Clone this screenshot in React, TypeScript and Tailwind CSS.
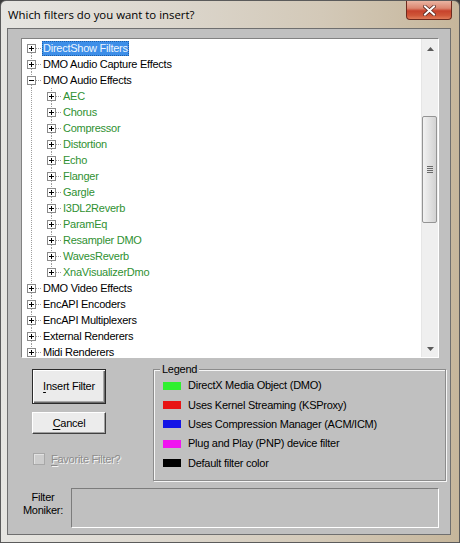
import React from 'react';

type Row = { label: string; level: 0 | 1; sel?: boolean; expanded?: boolean; first?: boolean; last?: boolean };

const children = ['AEC', 'Chorus', 'Compressor', 'Distortion', 'Echo', 'Flanger', 'Gargle', 'I3DL2Reverb', 'ParamEq', 'Resampler DMO', 'WavesReverb', 'XnaVisualizerDmo'];

const rows: Row[] = [
  { label: 'DirectShow Filters', level: 0, sel: true, first: true },
  { label: 'DMO Audio Capture Effects', level: 0 },
  { label: 'DMO Audio Effects', level: 0, expanded: true },
  ...children.map((c, i) => ({ label: c, level: 1 as const, last: i === children.length - 1 })),
  { label: 'DMO Video Effects', level: 0 },
  { label: 'EncAPI Encoders', level: 0 },
  { label: 'EncAPI Multiplexers', level: 0 },
  { label: 'External Renderers', level: 0 },
  { label: 'Midi Renderers', level: 0 },
];

function Expander({ minus, top, bottom }: { minus?: boolean; top: boolean; bottom: boolean }) {
  return (
    <svg width="20" height="16" shapeRendering="crispEdges" className="shrink-0">
      {top && <path d="M9.5 0V4" stroke="#a0a0a0" strokeDasharray="1 1" />}
      {bottom && <path d="M9.5 13V16" stroke="#a0a0a0" strokeDasharray="1 1" />}
      <path d="M14 8.5H20" stroke="#a0a0a0" strokeDasharray="1 1" />
      <rect x="5.5" y="4.5" width="8" height="8" fill="#fff" stroke="#8a8a8a" />
      <path d="M7 8.5H12" stroke="#000" />
      {!minus && <path d="M9.5 6V11" stroke="#000" />}
    </svg>
  );
}

function LineCell() {
  return (
    <svg width="20" height="16" shapeRendering="crispEdges" className="shrink-0">
      <path d="M9.5 0V16" stroke="#a0a0a0" strokeDasharray="1 1" />
    </svg>
  );
}

function TreeRow({ r }: { r: Row }) {
  return (
    <div className="flex h-[16px] items-center">
      {r.level === 0 ? (
        <Expander minus={r.expanded} top={!r.first} bottom={true} />
      ) : (
        <>
          <LineCell />
          <Expander top={true} bottom={!r.last} />
        </>
      )}
      <span
        className={
          'h-[15px] leading-[15px] px-[1px] whitespace-nowrap ' +
          (r.sel
            ? 'bg-[#3d8ee8] text-[#eef6ff] outline-1 outline-dotted outline-[#1d5ea8] -outline-offset-1'
            : r.level === 1
            ? 'text-[#2f9132]'
            : 'text-black')
        }
      >
        {r.label}
      </span>
    </div>
  );
}

function ScrollBar() {
  return (
    <div className="flex w-[17px] shrink-0 flex-col bg-[#efefef] border-l border-[#e6e6e6]">
      <div className="flex h-[17px] items-center justify-center">
        <svg width="7" height="4" className="mt-[2px]">
          <path d="M3.5 0L7 4H0Z" fill="#5a5a5a" />
        </svg>
      </div>
      <div className="h-[60px]" />
      <div className="mr-[1px] flex h-[107px] items-center justify-center rounded-[2px] border border-[#949494] bg-[linear-gradient(90deg,#f2f2f2,#e2e2e2_50%,#d2d2d2)]">
        <div className="flex flex-col gap-[1px]">
          <div className="h-px w-[6px] bg-[#6a6a6a]" />
          <div className="h-px w-[6px] bg-[#6a6a6a]" />
          <div className="h-px w-[6px] bg-[#6a6a6a]" />
          <div className="h-px w-[6px] bg-[#6a6a6a]" />
        </div>
      </div>
      <div className="flex-1" />
      <div className="flex h-[17px] items-center justify-center">
        <svg width="7" height="4">
          <path d="M0 0H7L3.5 4Z" fill="#5a5a5a" />
        </svg>
      </div>
    </div>
  );
}

const legend = [
  { c: 'bg-[#2ef02e]', t: 'DirectX Media Object (DMO)' },
  { c: 'bg-[#e81414]', t: 'Uses Kernel Streaming (KSProxy)' },
  { c: 'bg-[#1414e6]', t: 'Uses Compression Manager (ACM/ICM)' },
  { c: 'bg-[#f014f0]', t: 'Plug and Play (PNP) device filter' },
  { c: 'bg-black', t: 'Default filter color' },
];

export default function App() {
  return (
    <div className="h-[543px] w-[460px] bg-[#3c3c3c]">
      <div className="flex h-[543px] w-[460px] flex-col overflow-hidden rounded-t-[6px] border border-[#5b5b5b] bg-[linear-gradient(90deg,#e6e5e1_0%,#dcd7ce_35%,#d3c9b8_70%,#c6b69b_100%)] font-['Liberation_Sans',Arial,sans-serif] text-[11px] tracking-[-0.25px] text-black">
        {/* title bar */}
        <div className="flex h-[27px] shrink-0 items-start justify-between">
          <span className="ml-[7px] mt-[6px] font-['Open_Sans',sans-serif] text-[11.4px] leading-[16px] tracking-normal text-black">
            Which filters do you want to insert?
          </span>
          <div className="mr-[7px] flex h-[19px] w-[46px] items-center justify-center rounded-b-[4px] border border-t-0 border-[#6e2a1e] bg-[linear-gradient(180deg,#eab4a2_0%,#dc8670_40%,#c7422c_55%,#cf5638_80%,#e07a58_100%)]">
            <svg width="13" height="11" viewBox="0 0 13 11">
              <path d="M2 1.5L11 9.5M11 1.5L2 9.5" stroke="#5b2a22" strokeWidth="3.6" strokeLinecap="square" />
              <path d="M2 1.5L11 9.5M11 1.5L2 9.5" stroke="#ffffff" strokeWidth="2" strokeLinecap="square" />
            </svg>
          </div>
        </div>

        {/* client panel */}
        <div className="ml-[6px] mr-[8px] flex h-[507px] flex-col border border-[#6f6f6f] bg-[#c0c0c0]">
          {/* tree */}
          <div className="ml-[13px] mt-[9px] flex h-[320px] w-[418px] border border-[#828282] border-b-white border-r-white">
            <div className="flex flex-1 flex-col overflow-hidden bg-white pt-[1px]">
              {rows.map((r) => (
                <TreeRow key={r.label} r={r} />
              ))}
            </div>
            <ScrollBar />
          </div>

          {/* buttons + legend */}
          <div className="flex">
            <div className="ml-[24px] mt-[11px] flex w-[74px] shrink-0 flex-col">
              <div className="h-[35px] border border-[#2b2b2b] bg-[#ebebeb] shadow-[inset_1px_1px_0_#ffffff,inset_-1px_-1px_0_#6a6a6a,inset_-2px_-2px_0_#a8a8a8]">
                <div className="flex h-full items-center justify-center">
                  <span>
                    <span className="underline underline-offset-2">I</span>nsert Filter
                  </span>
                </div>
              </div>
              <div className="mt-[8px] flex h-[22px] items-center justify-center border border-t-white border-l-white border-b-[#404040] border-r-[#404040] bg-[#ececec] shadow-[inset_-1px_-1px_0_#a0a0a0]">
                <span>
                  <span className="underline underline-offset-2">C</span>ancel
                </span>
              </div>
              <div className="mt-[17px] flex items-center">
                <div className="ml-[1px] h-[12px] w-[12px] shrink-0 border border-[#a8a8a8] bg-[#cdcdcd] shadow-[inset_1px_1px_0_#e2e2e2]" />
                <span className="ml-[6px] whitespace-nowrap text-[#8c8c8c] [text-shadow:1px_1px_0_#f4f4f4]">
                  <span className="underline underline-offset-2">F</span>avorite Filter?
                </span>
              </div>
            </div>

            <div className="ml-[47px] mt-[11px] flex h-[112px] w-[293px] shrink-0 flex-col border border-[#8c8c8c] shadow-[inset_1px_1px_0_#f6f6f6,1px_1px_0_#f6f6f6]">
              <span className="-mt-[7px] ml-[6px] w-fit bg-[#c0c0c0] px-[2px] leading-[13px]">Legend</span>
              <div className="flex flex-col pl-[9px]">
                {legend.map((l) => (
                  <div key={l.t} className="flex h-[19.3px] items-center">
                    <div className={'h-[8px] w-[18px] ' + l.c} />
                    <span className="ml-[7px] whitespace-nowrap">{l.t}</span>
                  </div>
                ))}
              </div>
            </div>
          </div>

          {/* moniker */}
          <div className="mt-[7px] flex items-start">
            <div className="ml-[10px] mt-[3px] w-[50px] text-center leading-[13px]">
              Filter
              <br />
              Moniker:
            </div>
            <div className="ml-[3px] h-[40px] w-[368px] border border-[#7c7c7c] border-b-white border-r-white bg-[#c0c0c0]" />
          </div>
        </div>
      </div>
    </div>
  );
}
